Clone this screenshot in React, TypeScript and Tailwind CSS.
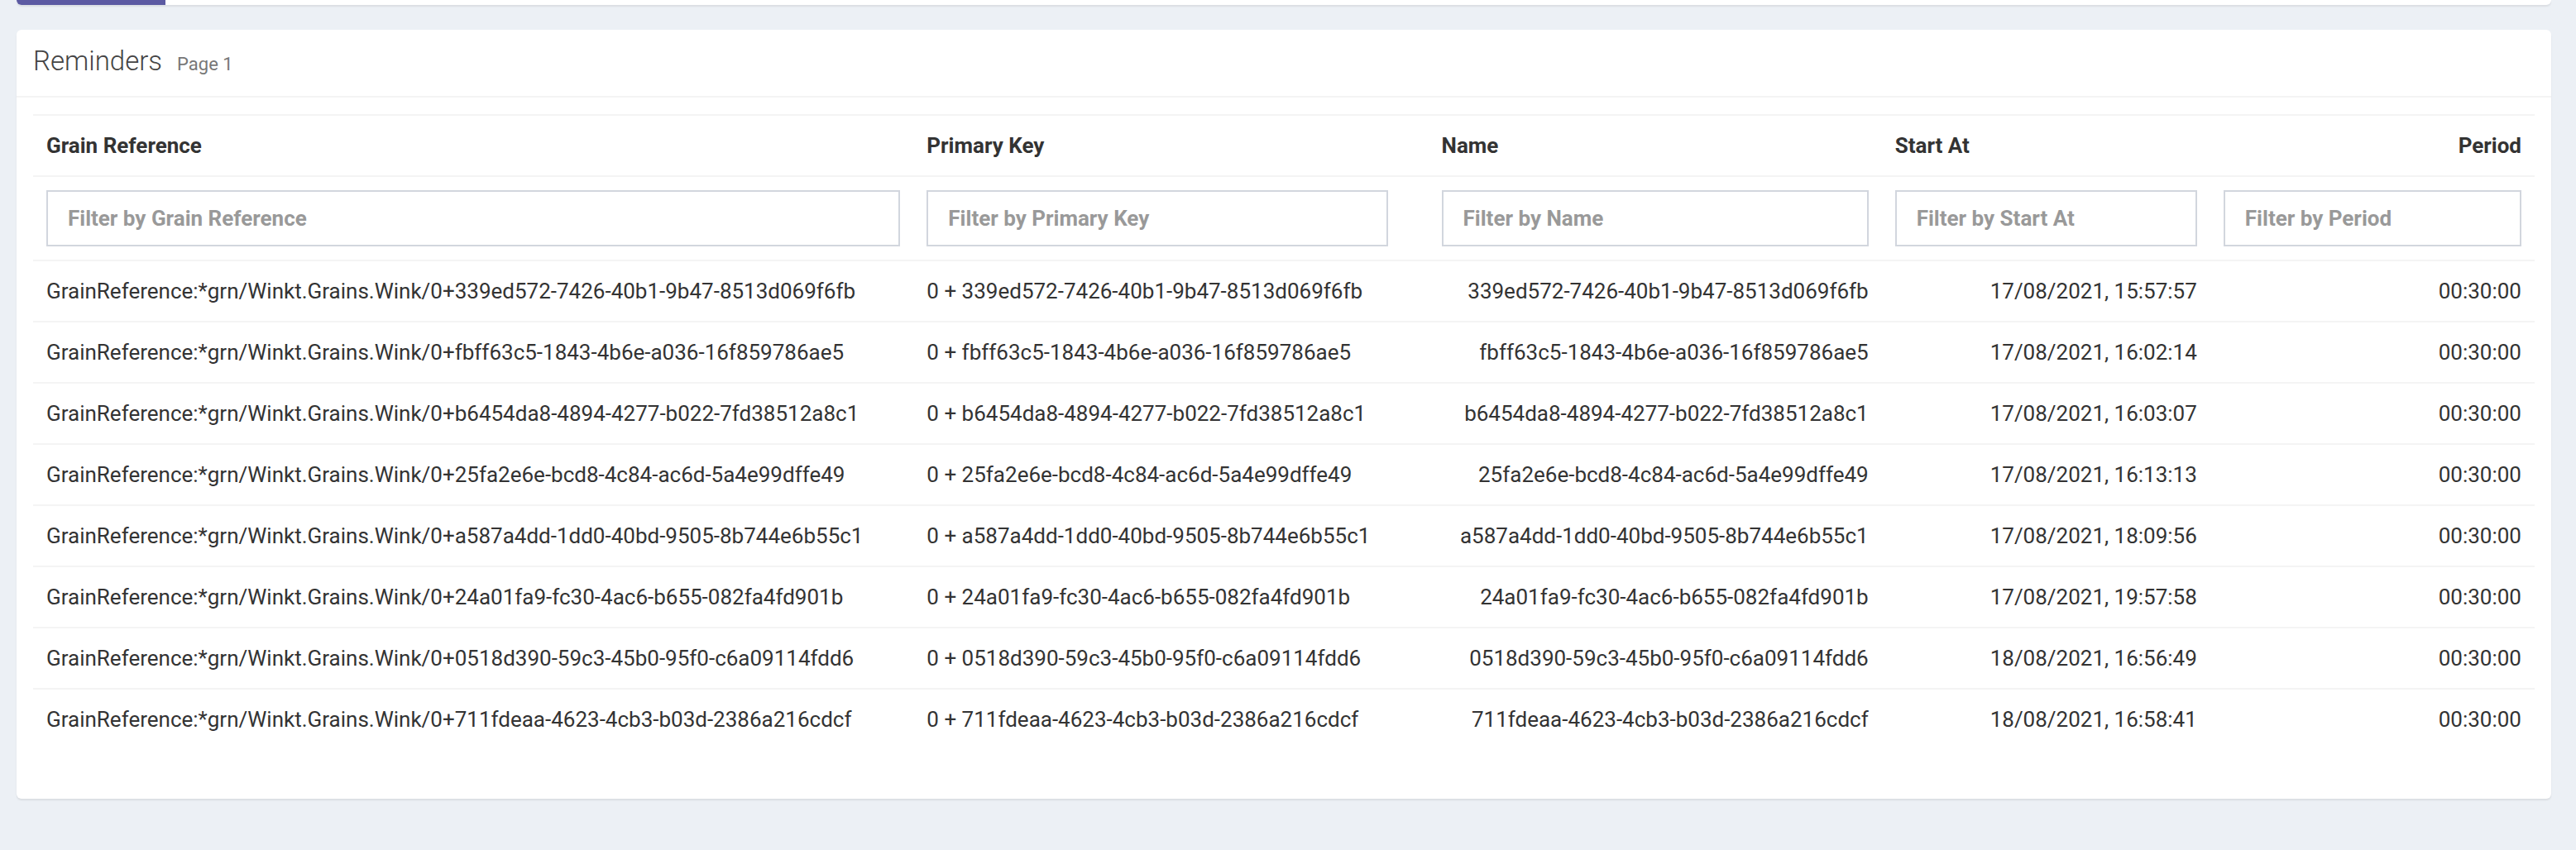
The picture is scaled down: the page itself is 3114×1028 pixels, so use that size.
const ROWS = [
	{ id: "339ed572-7426-40b1-9b47-8513d069f6fb", start: "17/08/2021, 15:57:57" },
	{ id: "fbff63c5-1843-4b6e-a036-16f859786ae5", start: "17/08/2021, 16:02:14" },
	{ id: "b6454da8-4894-4277-b022-7fd38512a8c1", start: "17/08/2021, 16:03:07" },
	{ id: "25fa2e6e-bcd8-4c84-ac6d-5a4e99dffe49", start: "17/08/2021, 16:13:13" },
	{ id: "a587a4dd-1dd0-40bd-9505-8b744e6b55c1", start: "17/08/2021, 18:09:56" },
	{ id: "24a01fa9-fc30-4ac6-b655-082fa4fd901b", start: "17/08/2021, 19:57:58" },
	{ id: "0518d390-59c3-45b0-95f0-c6a09114fdd6", start: "18/08/2021, 16:56:49" },
	{ id: "711fdeaa-4623-4cb3-b03d-2386a216cdcf", start: "18/08/2021, 16:58:41" },
];

const Filter = ({ placeholder }: { placeholder: string }) => (
	<input
		type="text"
		placeholder={placeholder}
		className="block w-full h-[68px] border-2 border-[#d2d6de] bg-white px-[24px] text-[26px] font-bold text-[#555] placeholder:text-[#999] outline-none"
	/>
);

const App = () => {
	return (
		<div
			className="min-h-screen bg-[#ecf0f5] pl-[20px] pr-[30px] text-[#333]"
			style={{ fontFamily: "Roboto, 'Open Sans', sans-serif" }}
		>
			{/* tab strip scrolled almost out of view */}
			<div className="flex h-[6px] rounded-b-[6px] bg-white shadow-[0_2px_2px_rgba(0,0,0,0.08)] overflow-hidden">
				<div className="w-[180px] bg-[#5c5aa2]" />
			</div>

			<div className="mt-[30px] rounded-[6px] bg-white shadow-[0_2px_2px_rgba(0,0,0,0.08)]">
				<div className="h-[82px] pt-[18px] px-[20px] border-b-2 border-[#f4f4f4] flex items-baseline">
					<h3 className="text-[33px] leading-[40px] font-light text-[#444]">Reminders</h3>
					<small className="ml-[18px] text-[22px] text-[#777]">Page 1</small>
				</div>

				<div className="p-[20px]">
					<table className="w-full table-fixed border-collapse mb-[40px] text-[26px] leading-[40px]">
						<colgroup>
							<col className="w-[1064px]" />
							<col className="w-[622px]" />
							<col className="w-[548px]" />
							<col className="w-[397px]" />
							<col className="w-[392px]" />
						</colgroup>
						<thead>
							<tr className="border-t-2 border-[#f4f4f4] font-bold">
								<th className="p-[16px] text-left">Grain Reference</th>
								<th className="p-[16px] text-left">Primary Key</th>
								<th className="p-[16px] text-left">Name</th>
								<th className="p-[16px] text-left">Start At</th>
								<th className="p-[16px] text-right">Period</th>
							</tr>
							<tr className="border-t-2 border-[#f4f4f4]">
								<th className="p-[16px]">
									<Filter placeholder="Filter by Grain Reference" />
								</th>
								<th className="py-[16px] pl-[16px] pr-[49px]">
									<Filter placeholder="Filter by Primary Key" />
								</th>
								<th className="p-[16px]">
									<Filter placeholder="Filter by Name" />
								</th>
								<th className="p-[16px]">
									<Filter placeholder="Filter by Start At" />
								</th>
								<th className="p-[16px]">
									<Filter placeholder="Filter by Period" />
								</th>
							</tr>
						</thead>
						<tbody>
							{ROWS.map((row) => (
								<tr key={row.id} className="border-t-2 border-[#f4f4f4]">
									<td className="p-[16px] whitespace-nowrap">
										GrainReference:*grn/Winkt.Grains.Wink/0+{row.id}
									</td>
									<td className="p-[16px] whitespace-nowrap">0 + {row.id}</td>
									<td className="p-[16px] text-right whitespace-nowrap">{row.id}</td>
									<td className="p-[16px] text-right whitespace-nowrap">{row.start}</td>
									<td className="p-[16px] text-right">00:30:00</td>
								</tr>
							))}
						</tbody>
					</table>
				</div>
			</div>
		</div>
	);
};

export default App;
